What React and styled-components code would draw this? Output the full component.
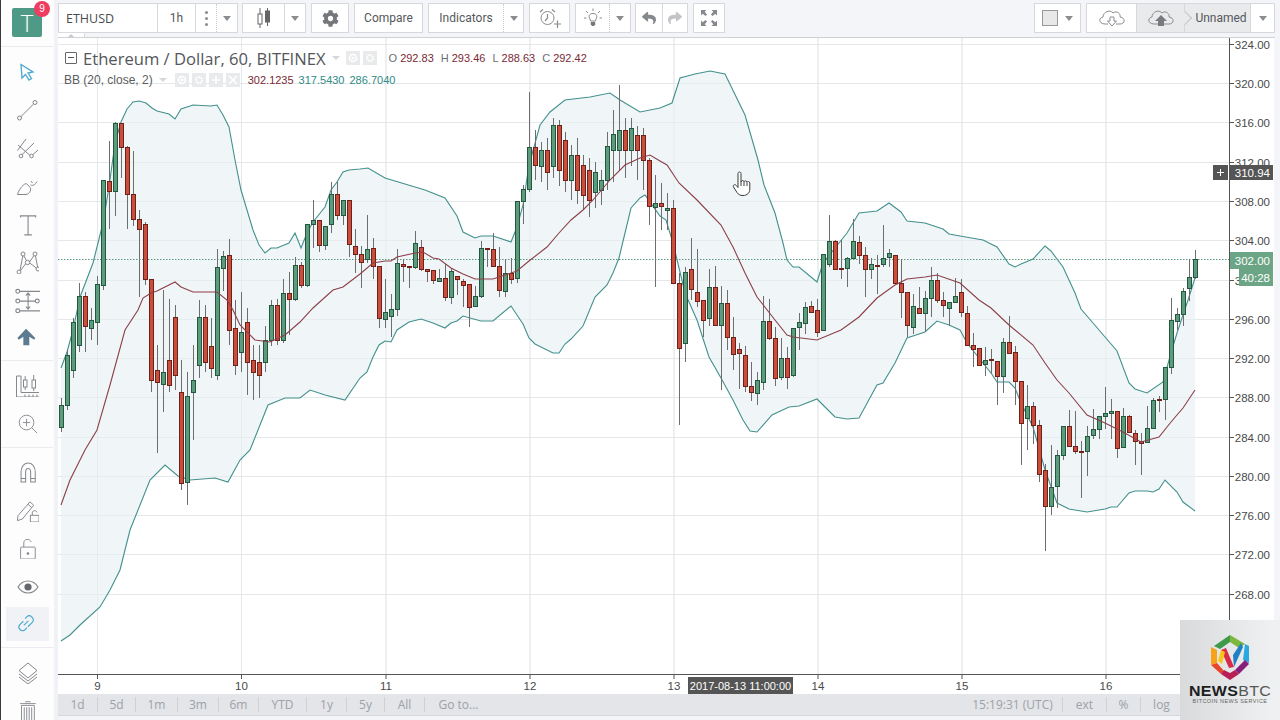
import React from 'react';
import styled, { createGlobalStyle } from 'styled-components';
import { FaCog, FaReply, FaShare } from 'react-icons/fa';

const Global = createGlobalStyle`
  html, body { margin: 0; padding: 0; width: 1280px; height: 720px; overflow: hidden; background: #f4f5f8; }
  * { box-sizing: border-box; }
`;
const SANS = '"Open Sans", "Liberation Sans", sans-serif';
const ROBOTO = 'Roboto, "Liberation Sans", sans-serif';
const ARIAL = '"Liberation Sans", Arial, sans-serif';

/* ---------- chart data (page pixels) ---------- */
// wick top, body top, body bottom, wick bottom, 1 = green
const CANDLES = [
[398,405,427,432,1],[350,355,405,410,1],[318,322,370,378,1],[283,296,345,352,1],[292,296,326,352,0],
[308,320,328,340,1],[276,284,322,345,1],[180,180,285,290,1],[141,181,191,229,0],[122,123,191,216,1],
[123,123,147,178,0],[146,147,194,229,0],[151,194,219,226,0],[210,219,229,297,0],[222,224,279,285,0],
[279,279,380,392,0],[345,370,382,453,0],[290,372,384,412,1],[299,360,385,392,0],[305,317,375,390,0],
[360,392,483,490,0],[372,396,482,505,1],[345,380,392,440,1],[300,317,365,378,1],[305,317,362,372,0],
[318,346,368,378,0],[249,267,375,380,1],[251,256,268,291,1],[239,255,330,345,0],[300,328,365,375,0],
[292,332,352,372,1],[308,322,362,395,0],[345,360,372,400,0],[345,362,375,398,0],[326,340,362,372,1],
[300,305,340,346,1],[299,305,340,345,0],[279,293,340,343,1],[272,293,299,335,0],[257,265,299,301,1],
[262,265,285,288,0],[224,224,285,287,1],[200,220,224,248,1],[220,220,245,252,0],[226,226,245,250,1],
[182,194,224,233,1],[182,194,215,220,0],[200,200,215,225,1],[200,200,244,257,0],[229,246,254,273,0],
[246,254,262,288,0],[215,249,259,263,1],[238,248,266,279,0],[266,266,318,328,0],[279,312,319,328,1],
[294,309,316,337,1],[249,263,309,316,1],[259,264,266,282,0],[266,266,267,288,0],[231,243,267,269,1],
[240,247,269,271,0],[269,269,271,282,0],[270,270,280,284,0],[269,278,281,281,1],[264,278,297,301,0],
[268,271,297,304,1],[276,276,279,295,0],[279,281,285,307,0],[284,284,307,327,0],[286,296,306,307,1],
[241,248,296,298,1],[248,248,249,267,0],[233,249,266,266,0],[247,266,290,297,0],[259,273,291,297,1],
[258,273,279,284,0],[201,201,278,283,1],[185,189,201,224,1],[92,147,189,192,1],[130,147,165,180,0],
[142,150,166,182,1],[138,150,172,190,0],[118,125,166,178,1],[120,125,170,186,0],[132,140,180,192,0],
[145,155,180,200,1],[138,155,190,204,0],[155,165,195,210,0],[158,170,200,217,0],[162,172,192,208,1],
[170,180,190,205,1],[132,146,180,190,1],[110,134,150,182,1],[85,130,150,170,1],[118,130,150,178,0],
[118,128,150,166,1],[126,135,150,180,0],[128,135,160,190,0],[158,160,206,225,0],[175,203,207,287,1],
[183,203,206,230,0],[193,208,210,230,1],[200,208,283,283,0],[273,283,348,425,0],[267,272,343,362,1],
[238,269,289,300,0],[249,292,301,307,0],[300,300,320,337,0],[269,287,318,326,1],[266,287,325,326,0],
[286,303,325,390,1],[290,303,337,350,0],[317,337,354,370,0],[343,349,353,389,0],[346,355,386,392,0],
[362,386,392,401,0],[372,380,393,405,1],[296,321,382,390,1],[299,321,338,340,0],[327,338,378,386,0],
[338,358,377,380,1],[347,358,377,389,0],[328,328,375,377,1],[313,322,327,350,1],[302,307,323,334,1],
[301,306,312,312,0],[299,310,332,337,0],[254,254,330,331,1],[215,241,264,267,1],[240,241,269,270,0],
[240,268,268,279,0],[257,258,268,287,1],[219,241,258,259,1],[236,242,255,264,0],[247,255,269,297,0],
[258,264,269,279,1],[255,265,265,294,0],[225,258,264,267,1],[249,253,257,267,1],[255,255,283,284,0],
[259,283,292,318,0],[292,292,325,337,0],[294,306,327,334,1],[287,308,313,314,0],[291,298,313,332,1],
[267,280,298,317,1],[273,280,300,303,0],[292,300,305,317,0],[302,302,308,326,1],[278,296,302,303,1],
[279,292,312,317,0],[306,313,345,346,0],[333,345,349,367,0],[348,348,365,366,0],[347,360,364,376,1],
[349,359,360,373,0],[361,361,376,405,0],[338,342,376,393,1],[316,342,353,354,0],[346,352,381,405,0],
[381,381,423,465,0],[385,406,418,450,1],[402,406,425,444,0],[420,425,474,482,0],[464,470,506,551,0],
[445,487,506,515,1],[450,455,486,508,1],[426,426,455,460,1],[410,426,446,446,0],[411,446,451,454,0],
[441,451,452,498,0],[426,436,451,476,1],[409,429,435,439,1],[416,416,429,439,1],[387,413,416,429,1],
[399,411,413,439,1],[411,411,448,458,0],[408,416,447,448,1],[415,416,432,433,0],[430,433,441,465,0],
[433,441,443,475,0],[406,428,442,443,1],[398,400,428,429,1],[396,399,400,412,0],[367,367,399,420,1],
[298,320,367,374,1],[308,314,321,330,1],[288,291,314,326,1],[259,277,288,301,1],[250,259,277,279,1],
];

const UPPER = [[61,368],[67,352],[73,330],[80,297],[93,263],[97,247],[103,223],[109,187],[115,143],[121,122],[127,109],[133,102],[139,101],[146,103],[152,108],[157,111],[169,114],[175,119],[181,109],[193,105],[211,106],[217,105],[223,115],[229,127],[235,160],[241,190],[247,210],[253,230],[259,245],[265,253],[271,248],[277,248],[289,243],[295,233],[301,248],[307,233],[313,222],[325,207],[331,190],[337,182],[343,172],[349,170],[360,169],[368,168],[385,178],[405,184],[425,190],[445,198],[457,216],[463,232],[475,238],[481,236],[493,236],[511,242],[517,227],[523,205],[529,165],[540,125],[550,112],[565,100],[590,97],[610,93],[620,100],[640,112],[660,108],[672,103],[680,78],[695,74],[710,71],[725,74],[745,115],[758,160],[764,185],[775,213],[783,243],[787,260],[793,267],[799,267],[817,282],[823,263],[835,248],[847,233],[859,213],[877,211],[889,203],[901,212],[907,221],[925,223],[943,229],[949,234],[960,236],[983,240],[997,247],[1009,264],[1015,267],[1021,264],[1033,259],[1045,246],[1051,251],[1063,267],[1075,293],[1081,309],[1093,323],[1117,351],[1129,383],[1135,389],[1147,393],[1163,382],[1171,353],[1177,333],[1189,297],[1195,278]];
const LOWER = [[61,641],[70,635],[80,625],[100,607],[110,590],[120,570],[130,530],[150,480],[165,465],[178,476],[190,480],[215,478],[228,482],[240,460],[250,450],[268,405],[285,398],[300,398],[310,390],[325,395],[345,400],[360,378],[367,372],[373,357],[379,345],[385,341],[391,342],[397,330],[409,322],[421,319],[433,323],[445,328],[451,323],[457,321],[463,316],[481,321],[493,321],[511,306],[523,324],[529,338],[535,344],[553,353],[559,353],[565,344],[571,339],[583,326],[595,297],[607,285],[613,273],[619,258],[625,233],[631,208],[640,198],[645,195],[660,216],[666,220],[673,243],[685,293],[697,320],[709,357],[721,378],[733,400],[743,420],[750,431],[757,432],[772,415],[789,407],[799,406],[817,399],[823,405],[835,417],[847,419],[859,418],[865,407],[877,385],[883,383],[895,363],[907,338],[925,332],[937,321],[949,325],[960,330],[967,343],[979,358],[991,373],[997,382],[1009,382],[1015,388],[1021,403],[1033,427],[1039,448],[1045,470],[1057,503],[1069,509],[1087,512],[1105,509],[1111,507],[1117,507],[1129,493],[1135,491],[1147,491],[1153,492],[1159,489],[1165,480],[1177,492],[1183,502],[1195,511]];
const MIDDLE = [[61,505],[70,480],[85,450],[97,430],[110,385],[125,330],[138,310],[143,298],[151,293],[157,291],[175,282],[181,287],[193,292],[217,292],[227,300],[233,310],[240,325],[255,340],[270,342],[285,335],[300,322],[313,308],[333,290],[343,287],[360,274],[373,263],[385,261],[391,261],[397,257],[415,253],[423,252],[433,258],[439,259],[451,268],[463,274],[475,279],[493,279],[505,275],[517,271],[529,261],[547,247],[559,233],[571,220],[583,210],[593,200],[610,180],[625,165],[640,158],[650,155],[660,161],[667,165],[679,183],[697,200],[721,225],[733,247],[745,273],[757,297],[775,320],[787,335],[793,337],[817,340],[841,330],[859,317],[877,298],[895,285],[907,279],[925,277],[937,275],[960,283],[979,300],[991,308],[1009,325],[1033,345],[1045,363],[1057,380],[1069,393],[1087,415],[1105,423],[1123,432],[1141,442],[1159,437],[1171,422],[1183,408],[1195,390]];

const PRICES = [[44,'324.00'],[83,'320.00'],[122,'316.00'],[162,'312.00'],[201,'308.00'],[240,'304.00'],[280,'300.00'],[319,'296.00'],[358,'292.00'],[397,'288.00'],[437,'284.00'],[476,'280.00'],[515,'276.00'],[554,'272.00'],[594,'268.00']];
const DATES = [[97.5,'9'],[241.5,'10'],[386,'11'],[530,'12'],[674,'13'],[818,'14'],[962,'15'],[1106,'16']];
const toPts = (a) => a.map((p) => p.join(',')).join(' ');

/* ---------- page shell ---------- */
const Page = styled.div`
  position: relative; width: 1280px; height: 720px; display: flex;
  background: #f4f5f8; font-family: ${SANS}; overflow: hidden;
`;
const Rail = styled.aside`
  width: 58px; height: 720px; flex: none; display: flex; flex-direction: column;
  background: linear-gradient(to right, #fdfdfe 0, #fdfdfe 53px, #f1f2f5 53px);
  border-left: 1px solid #3a3a3e;
`;
const LogoCell = styled.div` position: relative; height: 46px; padding: 8px 0 0 11px; flex: none; `;
const LogoMark = styled.div`
  width: 30px; height: 29px; border-radius: 2px; background: #4f9a87; color: #fff;
  font: 300 24px/29px ${SANS}; text-align: center;
`;
const Badge = styled.span`
  position: absolute; left: 33px; top: 1px; width: 16px; height: 16px; border-radius: 50%;
  background: #ee3d5f; color: #fff; font: 10px/16px ${ARIAL}; text-align: center;
`;
const RailRule = styled.hr` margin: ${(p) => p.$before}px 5px ${(p) => p.$after}px 0; width: 52px; border: 0; border-top: 1px solid #e9ebee; flex: none; `;
const ToolList = styled.div` display: flex; flex-direction: column; flex: none; `;
const Tool = styled.div`
  width: 52px; height: 38px; display: flex; align-items: center; justify-content: center;
  color: ${(p) => (p.$accent ? '#4aa8d0' : '#84878c')};
  & > svg { fill: none; stroke: currentColor; stroke-width: 1; }
`;
const ActiveTool = styled(Tool)`
  position: relative;
  &::before { content: ''; position: absolute; left: 5px; right: 4px; top: 2px; bottom: 2px; background: #f0f2f5; }
  & > svg { position: relative; }
`;
const Main = styled.div` flex: 1; min-width: 0; display: flex; flex-direction: column; `;

/* ---------- top bar ---------- */
const TopBar = styled.header`
  position: relative; height: 38px; flex: none; display: flex; align-items: flex-start;
  padding: 3px 0 0 0; border-bottom: 1px solid #cfd1d4; width: 1217px;
`;
const CollapseTab = styled.div`
  position: absolute; left: 0; bottom: 0; width: 27px; height: 5px; background: #fff;
  border: 1px solid #d8dadd; border-bottom: 0; border-left: 0;
  &::after { content: ''; position: absolute; left: 10px; top: 1px; border: 3px solid transparent; border-top: 0; border-bottom: 3px solid #c7c9cc; }
`;
const Group = styled.div`
  display: flex; height: 30px; flex: none; border: 1px solid #d6d8db; background: #fff;
  margin-left: ${(p) => p.$gap || 0}px;
`;
const PushRight = styled.div` flex: 1; `;
const Cell = styled.div`
  width: ${(p) => p.$w}px; height: 28px; display: flex; align-items: center; justify-content: center; flex: none;
  color: #55585c; font: 12px ${ROBOTO};
  background: ${(p) => (p.$gray ? '#e9eaec' : 'transparent')};
  border-left: ${(p) => (p.$sep === 'dot' ? '1px dotted #c9cbce' : p.$sep ? '1px solid #d6d8db' : '0')};
`;
const SymbolCell = styled(Cell)` justify-content: flex-start; padding-left: 7px; font: 12.5px ${SANS}; color: #4a4d50; `;
const Caret = styled.i`
  display: block; width: 0; height: 0; border-left: 4px solid transparent; border-right: 4px solid transparent;
  border-top: 5px solid ${(p) => p.$c || '#8a8c90'};
`;
const Dots = styled.i`
  display: block; width: 3px; height: 3px; border-radius: 50%; background: #8a8c90;
  box-shadow: 0 -6px 0 #8a8c90, 0 6px 0 #8a8c90;
`;
const NameCell = styled(Cell)`
  position: relative; padding-left: 7px;
  &::before { content: ''; position: absolute; left: -5px; top: 9px; width: 9px; height: 9px; border-top: 1px solid #c4c6c9; border-right: 1px solid #c4c6c9; transform: rotate(45deg); background: #e9eaec; }
`;
const Swatch = styled.i` display: block; width: 16px; height: 16px; background: #e8e8e8; border: 1px solid #999; margin-right: 7px; `;

/* ---------- chart ---------- */
const ChartPane = styled.section` position: relative; width: 1216px; height: 656px; flex: none; background: #fff; `;
const ChartSvg = styled.svg` display: block; width: 1216px; height: 656px; `;
const PriceText = styled.text` font: 11.5px ${ARIAL}; fill: ${(p) => p.$fill || '#4a4a4a'}; text-anchor: end; `;
const DateText = styled.text` font: ${(p) => p.$size || 11.5}px ${ARIAL}; fill: ${(p) => p.$fill || '#4a4a4a'}; text-anchor: middle; `;
const Legend = styled.div` position: absolute; left: 0; top: 0; display: flex; flex-direction: column; `;
const TitleRow = styled.div` display: flex; align-items: center; height: 20px; margin-top: 10px; padding-left: 7px; `;
const StudyRow = styled.div` display: flex; align-items: center; height: 20px; margin-top: 2px; padding-left: 6px; font: 12px ${ARIAL}; color: #5a5d60; `;
const Collapse = styled.i`
  display: block; position: relative; width: 12px; height: 12px; border: 1px solid #666; border-radius: 1px; margin-right: 6px;
  &::after { content: ''; position: absolute; left: 2px; right: 2px; top: 4px; height: 1px; background: #555; }
`;
const Title = styled.span` font: 500 16.6px ${SANS}; color: #54575a; white-space: nowrap; `;
const FadedCaret = styled.i`
  display: block; margin: 0 ${(p) => p.$after || 6}px 0 6px; width: 0; height: 0; border-left: 4px solid transparent; border-right: 4px solid transparent;
  border-top: 4px solid #d5d7da;
`;
const Mini = styled.span`
  width: 14px; height: 14px; margin-right: 3px; display: flex; align-items: center; justify-content: center; background: #e8eaec; flex: none;
  & svg { stroke: #fff; fill: none; stroke-width: 1.6; }
`;
const Ohlc = styled.span` font: 11px ${ARIAL}; color: #6b6e72; margin-left: 9px; white-space: nowrap; `;
const Val = styled.span` font-size: 11px; color: ${(p) => p.$c || '#7a2a35'}; margin: 0 ${(p) => p.$gap ?? 7}px 0 ${(p) => p.$lead ?? 3}px; `;

/* ---------- bottom bar ---------- */
const BottomBar = styled.footer`
  height: 22px; width: 1216px; flex: none; display: flex; align-items: center;
  background: #e3e5e9; border-bottom: 1px solid #d5d7da; color: #9ea1a6; font: 12px ${SANS};
`;
const Range = styled.span`
  width: ${(p) => p.$w}px; height: 15px; line-height: 15px; text-align: center; flex: none;
  border-right: ${(p) => (p.$last ? 0 : '1px solid #cfd1d5')};
`;
const Spacer = styled.div` flex: 1; `;

/* ---------- watermark ---------- */
const Watermark = styled.div`
  position: absolute; right: 0; bottom: 0; width: 100px; height: 100px;
  background: linear-gradient(90deg, #d9dadb, #eef0f1 90%);
  display: flex; flex-direction: column; align-items: center; padding-top: 13px;
`;
const WmName = styled.div` font: 700 14px/14px ${ARIAL}; color: #1d1d1f; letter-spacing: .3px; margin-top: 3px; transform: scaleX(1.14); white-space: nowrap; & b { font-weight: 400; color: #555; } `;
const WmSub = styled.div` font: 5.5px/7px ${ARIAL}; color: #666; letter-spacing: .45px; white-space: nowrap; `;
const HandLayer = styled.svg` position: absolute; left: 732px; top: 171px; fill: #fff; stroke: #3a3a3a; stroke-width: 1; `;

const I = ({ children, s = 24 }) => <svg width={s} height={s} viewBox="0 0 24 24">{children}</svg>;

const rail1 = [
  <Tool $accent key="a"><I><path d="M6 4.5 L18 12 L13 13 L16.5 18.5 L14 20 L10.5 14.5 L7 18 Z" strokeWidth="1.3"/></I></Tool>,
  <Tool key="b"><I><circle cx="4.5" cy="20" r="2"/><circle cx="20" cy="4.5" r="2"/><path d="M6 18.5 L18.6 6"/></I></Tool>,
  <Tool key="c"><I><circle cx="6" cy="20" r="1.8"/><circle cx="16.5" cy="20" r="1.8"/><path d="M3 9 L14.8 19.2 M7 18.600 L19 7 M2.500 14.500 L11 3 M18 18.500 L23 14"/></I></Tool>,
  <Tool key="d"><I><path d="M2.500 20.500 H11 C15 20 17 15 14.500 12.500 L11 9.500 C7 11 4 16 2.500 20.500 Z"/><path d="M15.500 11 C18 12 20 11 22 7.500 M16 7 L17.500 9"/></I></Tool>,
  <Tool key="e"><I s={26}><path d="M6 6 V4.500 H20 V6 M13 4.500 V22 M9.500 22 H16.500" strokeWidth="1"/></I></Tool>,
  <Tool key="f"><I s={24}><circle cx="8" cy="4" r="2"/><circle cx="20" cy="4" r="2"/><circle cx="4" cy="22" r="2"/><circle cx="23" cy="19" r="2"/><circle cx="12.500" cy="12.500" r="2.200"/><path d="M5 20.500 L7.800 6 M9 6 L11.500 10.600 M14.500 12 L19 5.500 M20.500 6 L22.600 17 M14.700 13 L21.300 18 M10.600 13.800 L5.500 20.600"/></I></Tool>,
  <Tool key="g"><I s={26}><circle cx="3.500" cy="4" r="1.800"/><circle cx="3.500" cy="13" r="1.800"/><circle cx="21.500" cy="13" r="1.800"/><circle cx="3.500" cy="22" r="1.800"/><path d="M5.500 4 H24 M5.500 13 H19.500 M5.500 22 H24 M13 5.500 V20.500 M11 8 L13 5.500 L15 8 M11 18 L13 20.500 L15 18"/></I></Tool>,
  <Tool key="h"><I s={22}><path d="M11 2 L21 12 L20 14 L14.500 10.500 V20 H8 V10.500 L3 14 L1.500 12 Z" style={{ fill: '#5d7b90', stroke: 'none' }}/></I></Tool>,
];
const rail2 = [
  <Tool key="a"><I s={24}><path d="M1.500 3 V24 H25 V19.500 H6 V3 Z M10 24 V21.500 M14 24 V21.500 M18 24 V21.500 M22 24 V21.500"/><rect x="8.500" y="7" width="3.500" height="7"/><rect x="17" y="7" width="3.500" height="8"/><path d="M10.200 3 V7 M10.200 14 V17 M18.700 2 V7 M18.700 15 V18"/></I></Tool>,
  <Tool key="b"><I s={22}><circle cx="11.500" cy="11.500" r="8"/><path d="M11.500 7.500 V15.500 M7.500 11.500 H15.500 M17.500 17.500 L23 23"/></I></Tool>,
];
const rail3 = [
  <Tool key="a"><I s={22}><path d="M5.500 23 V12 C5.500 -1 21 -1 21 12 V23 H16 V12 C16 7 10.500 7 10.500 12 V23 Z M5.500 19 H10.500 M16 19 H21" strokeWidth="1.100"/></I></Tool>,
  <Tool key="b"><I s={23}><path d="M2 17.500 L14.500 3 L18.500 6.500 L6.500 21 L1.500 22.500 Z M12.500 5.500 L16.500 9"/><rect x="15" y="17" width="9" height="7" /><path d="M17 17 V14.500 C17 11.500 21 11.500 22 14"/></I></Tool>,
  <Tool key="c"><I s={22}><rect x="5" y="11" width="16" height="13" rx="1"/><path d="M8.500 11 V6.500 C8.500 2 15 1 16.500 5.500"/><circle cx="13" cy="18" r="1" style={{ fill: '#75787d' }}/></I></Tool>,
  <Tool key="d"><I s={24}><path d="M3 13 C8 5 18 5 23 13 C18 21 8 21 3 13 Z" strokeWidth="1.200"/><circle cx="13" cy="13" r="3.600" style={{ fill: '#63666c', stroke: 'none' }}/></I></Tool>,
  <ActiveTool $accent key="e"><I s={22}><path d="M8.500 13.500 L13.500 8.500 M10 6 L12 4 C15 1 21 6 18 10 L13 15 M12 16 L9.500 18.500 C6 21 1 16.500 4 13 L8 9" strokeWidth="1.200"/></I></ActiveTool>,
];
const rail4 = [
  <Tool key="a"><I s={24}><path d="M13 3 L22 10.500 L13 18 L4 10.500 Z M4 14 L13 21 L22 14 M4 17 L13 24 L22 17"/></I></Tool>,
  <Tool key="b"><I s={22}><path d="M10 3 H16 M4.500 5 H21.500 M6 7 H20 V25 H6 Z M9 9 V25 M11.700 9 V25 M14.400 9 V25 M17.100 9 V25"/></I></Tool>,
];

const Candle = ({ c, i }) => {
  const [wt, bt, bb, wb, up] = c;
  const x = Math.round(61.3 + 6 * i) + 0.5;
  const fill = up ? '#5c9c7c' : '#c94f3c';
  const line = up ? '#23573f' : '#6f2019';
  return (
    <g>
      <line x1={x} x2={x} y1={wt} y2={wb} stroke="#6e6e6e" />
      <rect x={x - 2} y={Math.round(bt) + 0.5} width={4} height={Math.max(1, Math.round(bb - bt))} fill={fill} stroke={line} />
    </g>
  );
};

const Chart = () => (
  <ChartSvg viewBox="58 38 1216 656">
    {PRICES.map(([y]) => <line key={y} x1="58" x2="1229" y1={y + 0.5} y2={y + 0.5} stroke="#e7e9eb" />)}
    {DATES.map(([x]) => <line key={x} x1={x} x2={x} y1="38" y2="674" stroke="#e7e9eb" />)}
    <polygon points={toPts([...UPPER, ...[...LOWER].reverse()])} fill="#f0f6f8" />
    {PRICES.map(([y]) => <line key={y} x1="58" x2="1229" y1={y + 0.5} y2={y + 0.5} stroke="#e4e8ea" opacity=".7" />)}
    {DATES.map(([x]) => <line key={x} x1={x} x2={x} y1="38" y2="674" stroke="#e4e8ea" opacity=".7" />)}
    <polyline points={toPts(UPPER)} fill="none" stroke="#43908d" strokeWidth="1.1" />
    <polyline points={toPts(LOWER)} fill="none" stroke="#43908d" strokeWidth="1.1" />
    <line x1="58" x2="1229" y1="259.5" y2="259.5" stroke="#5c9a80" strokeDasharray="1.5 1.5" />
    {CANDLES.map((c, i) => <Candle key={i} c={c} i={i} />)}
    <polyline points={toPts(MIDDLE)} fill="none" stroke="#8c3f49" strokeWidth="1.1" />
    <line x1="58" x2="1229" y1="674.5" y2="674.5" stroke="#555" />
    <line x1="1229.5" x2="1229.5" y1="38" y2="675" stroke="#555" />
    {DATES.map(([x]) => <line key={x} x1={x} x2={x} y1="675" y2="679" stroke="#555" />)}
    {DATES.map(([x, t]) => <DateText key={t} x={x} y="690">{t}</DateText>)}
    {PRICES.map(([y, t]) => (
      <g key={t}>
        <line x1="1229" x2="1234" y1={y + 0.5} y2={y + 0.5} stroke="#555" />
        <PriceText x="1270" y={y + 4.5}>{t}</PriceText>
      </g>
    ))}
    <rect x="1213" y="165" width="15" height="15" fill="#555" />
    <path d="M1217 172.5 H1224 M1220.5 169 V176" stroke="#fff" />
    <rect x="1230" y="165" width="43" height="15" fill="#555" />
    <PriceText x="1270" y="176.5" $fill="#fff">310.94</PriceText>
    <rect x="1230" y="252" width="43" height="17" fill="#6ba585" />
    <PriceText x="1270" y="264.5" $fill="#fff">302.00</PriceText>
    <rect x="1239" y="269" width="34" height="17" fill="#6ba585" />
    <PriceText x="1270" y="281.5" $fill="#fff">40:28</PriceText>
    <rect x="688" y="677" width="105" height="17" fill="#555" />
    <DateText x="740.5" y="689.500" $size={11} $fill="#fff">2017-08-13 11:00:00</DateText>
  </ChartSvg>
);

export default function App() {
  return (
    <Page>
      <Global />
      <Rail>
        <LogoCell><LogoMark>T</LogoMark><Badge>9</Badge></LogoCell>
        <RailRule $before={0} $after={6} />
        <ToolList>{rail1}</ToolList>
        <RailRule $before={3} $after={5} />
        <ToolList>{rail2}</ToolList>
        <RailRule $before={5} $after={5} />
        <ToolList>{rail3}</ToolList>
        <RailRule $before={4} $after={5} />
        <ToolList>{rail4}</ToolList>
      </Rail>
      <Main>
        <TopBar>
          <Group>
            <SymbolCell $w={98}>ETHUSD</SymbolCell>
            <Cell $w={38} $sep>1h</Cell>
            <Cell $w={21} $sep><Dots /></Cell>
            <Cell $w={21} $sep="dot"><Caret /></Cell>
          </Group>
          <Group $gap={4}>
            <Cell $w={41}><svg width="14" height="20" viewBox="0 0 14 20"><path d="M3 0 V20 M10.500 0 V18" stroke="#666"/><rect x="1" y="6" width="4" height="10" fill="#fff" stroke="#666"/><rect x="8.500" y="3" width="4" height="11" fill="#666" stroke="#666"/></svg></Cell>
            <Cell $w={21} $sep><Caret /></Cell>
          </Group>
          <Group $gap={5}><Cell $w={36}><FaCog size={17} color="#75777a" /></Cell></Group>
          <Group $gap={5}><Cell $w={67}>Compare</Cell></Group>
          <Group $gap={5}>
            <Cell $w={74}>Indicators</Cell>
            <Cell $w={20} $sep="dot"><Caret /></Cell>
          </Group>
          <Group $gap={5}>
            <Cell $w={39}><svg width="22" height="20" viewBox="0 0 22 20" fill="none" stroke="#8a8c90"><circle cx="8.500" cy="10" r="6.500"/><path d="M8.500 6 V10 L6 13 M1 4 L4 1.500 M13 1.500 L16 4 M15 16 H22 M18.500 12.500 V20" strokeWidth="1.200"/></svg></Cell>
          </Group>
          <Group $gap={5}>
            <Cell $w={33}><svg width="20" height="20" viewBox="0 0 20 20" fill="none" stroke="#8a8c90"><path d="M7 11 C5 8 6.500 5.500 10 5.500 C13.500 5.500 15 8 13 11 L12.500 13 H7.500 Z"/><path d="M7.800 14 H12.200 V16.500 L11 18 H9 L7.800 16.500 Z" fill="#777" stroke="none"/><path d="M10 0.500 V3 M3 3 L5 5 M17 3 L15 5 M1 10 H3.500 M19 10 H16.500"/></svg></Cell>
            <Cell $w={21} $sep="dot"><Caret /></Cell>
          </Group>
          <Group $gap={4}>
            <Cell $w={26}><FaReply size={14} color="#85888c" /></Cell>
            <Cell $w={25} $sep><FaShare size={14} color="#c2c4c7" /></Cell>
          </Group>
          <Group $gap={5}>
            <Cell $w={30}><svg width="18" height="18" viewBox="0 0 18 18" fill="#85888c"><path d="M1 1 H6.500 L4.700 2.800 L7 5.500 L5.500 7 L2.800 4.700 L1 6.500 Z M17 1 H11.500 L13.300 2.800 L11 5.500 L12.500 7 L15.200 4.700 L17 6.500 Z M1 17 H6.500 L4.700 15.200 L7 12.500 L5.500 11 L2.800 13.300 L1 11.500 Z M17 17 H11.500 L13.300 15.200 L11 12.500 L12.500 11 L15.200 13.300 L17 11.500 Z"/></svg></Cell>
          </Group>
          <PushRight />
          <Group>
            <Cell $w={45}><Swatch /><Caret /></Cell>
          </Group>
          <Group $gap={5}>
            <Cell $w={49}><svg width="28" height="18" viewBox="0 0 28 18" fill="none" stroke="#8a8c90"><path d="M7 15 C1 15 0 9 5 8 C5 3 12 0 15 4 C19 1 23 5 22 8 C28 9 27 15 22 15 H18 M10 15 H7"/><path d="M12 8 H16 V12 H18.500 L14 17 L9.500 12 H12 Z"/></svg></Cell>
            <Cell $w={48} $sep $gray><svg width="28" height="18" viewBox="0 0 28 18" fill="none" stroke="#8a8c90"><path d="M7 15 C1 15 0 9 5 8 C5 3 12 0 15 4 C19 1 23 5 22 8 C28 9 27 15 22 15 Z"/><path d="M14 6 L20 12 H17 V17 H11 V12 H8 Z" fill="#787a7e" stroke="none"/></svg></Cell>
            <NameCell $w={66} $sep $gray>Unnamed</NameCell>
            <Cell $w={24} $sep><Caret /></Cell>
          </Group>
          <CollapseTab />
        </TopBar>
        <ChartPane>
          <Chart />
          <Legend>
            <TitleRow>
              <Collapse />
              <Title>Ethereum / Dollar, 60, BITFINEX</Title>
              <FadedCaret />
              <Mini><svg width="10" height="10" viewBox="0 0 10 10"><circle cx="5" cy="5" r="3.500"/><circle cx="5" cy="5" r=".8"/></svg></Mini>
              <Mini><svg width="10" height="10" viewBox="0 0 10 10"><circle cx="5" cy="5" r="3" strokeDasharray="1.600 .7" strokeWidth="2"/></svg></Mini>
              <Ohlc>O<Val>292.83</Val>H<Val>293.46</Val>L<Val>288.63</Val>C<Val $gap={0}>292.42</Val></Ohlc>
            </TitleRow>
            <StudyRow>
              BB (20, close, 2)
              <FadedCaret $after={8} />
              <Mini><svg width="10" height="10" viewBox="0 0 10 10"><circle cx="5" cy="5" r="3.500"/><circle cx="5" cy="5" r=".8"/></svg></Mini>
              <Mini><svg width="10" height="10" viewBox="0 0 10 10"><circle cx="5" cy="5" r="3" strokeDasharray="1.600 .7" strokeWidth="2"/></svg></Mini>
              <Mini><svg width="10" height="10" viewBox="0 0 10 10"><path d="M5 1 V9 M1 5 H9"/></svg></Mini>
              <Mini><svg width="10" height="10" viewBox="0 0 10 10"><path d="M1 1 L9 9 M9 1 L1 9"/></svg></Mini>
              <Val $c="#7a2a35" $lead={5} $gap={5}>302.1235</Val>
              <Val $c="#2f8a86" $lead={0} $gap={5}>317.5430</Val>
              <Val $c="#2f8a86" $lead={0} $gap={0}>286.7040</Val>
            </StudyRow>
          </Legend>
        </ChartPane>
        <BottomBar>
          <Range $w={40}>1d</Range>
          <Range $w={38}>5d</Range>
          <Range $w={42}>1m</Range>
          <Range $w={41}>3m</Range>
          <Range $w={40}>6m</Range>
          <Range $w={48}>YTD</Range>
          <Range $w={40}>1y</Range>
          <Range $w={38}>5y</Range>
          <Range $w={40}>All</Range>
          <Range $w={67} $last>Go to...</Range>
          <Spacer />
          <Range $w={100}>15:19:31 (UTC)</Range>
          <Range $w={44}>ext</Range>
          <Range $w={34}>%</Range>
          <Range $w={41} $last>log</Range>
          <Range $w={92} $last />
        </BottomBar>
      </Main>
      <HandLayer width="22" height="26" viewBox="0 0 22 26">
        <path d="M6 2.500 C6 .5 9 .5 9 2.500 V11 C9.500 9 11.500 9 12 10.800 C12.500 9.500 14.500 9.500 15 11.300 C15.500 10 17.500 10.200 17.800 12 V18 C17.800 22 15 24.500 11 24.500 C8 24.500 6.500 23.500 5 21.500 L1.500 16 C.5 14 3 12.800 4.300 14.500 L6 16.500 Z" />
        <path d="M9 11 V15 M12 11 V15 M15 11.500 V15" />
      </HandLayer>
      <Watermark>
        <svg width="44" height="48" viewBox="0 0 44 48">
          <polygon points="6,13 22,2 22,9 12,16" fill="#3f9a4a" />
          <polygon points="22,2 37,11 31,15 22,9" fill="#7bb83d" />
          <polygon points="37,11 41,13 41,30 35,27" fill="#2ba8e0" />
          <polygon points="3,14 9,17 9,30 3,32" fill="#f7a11a" />
          <polygon points="3,32 9,30 16,38 13,41" fill="#e8452c" />
          <polygon points="13,41 22,47 31,41 27,37 22,40 16,37" fill="#b81f57" />
          <polygon points="31,41 41,31 37,27 27,37" fill="#8a1f7b" />
          <polygon points="13,17 18,15 26,34 21,35" fill="#d92a4a" />
          <polygon points="26,34 25,22 33,10 35,14" fill="#1f80c4" />
          <polygon points="13,17 17,19 14,31 10,28" fill="#f5c518" />
        </svg>
        <WmName>NEWS<b>BTC</b></WmName>
        <WmSub>BITCOIN NEWS SERVICE</WmSub>
      </Watermark>
    </Page>
  );
}
